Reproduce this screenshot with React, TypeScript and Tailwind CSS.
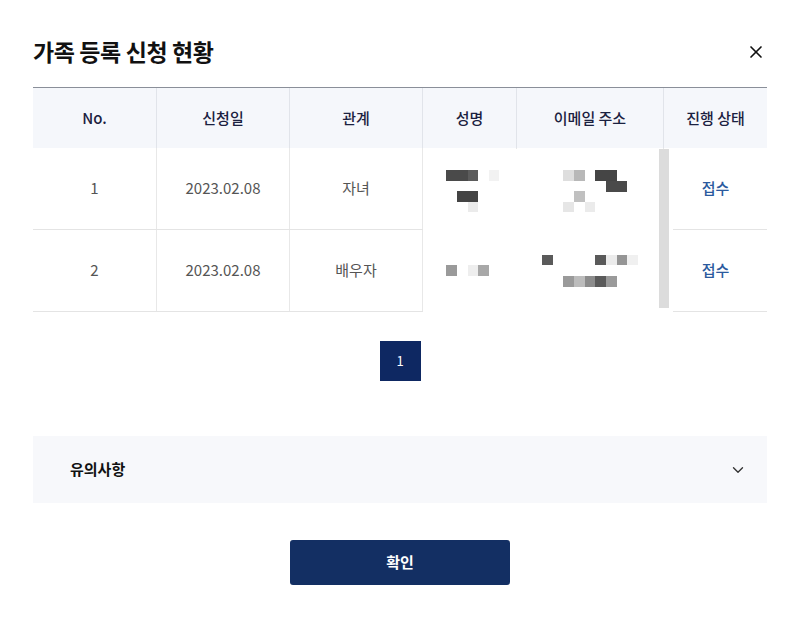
import { X, ChevronDown } from "lucide-react";

const COLS = ["No.", "신청일", "관계", "성명", "이메일 주소", "진행 상태"];

const ROWS = [
  { no: "1", date: "2023.02.08", rel: "자녀", status: "접수" },
  { no: "2", date: "2023.02.08", rel: "배우자", status: "접수" },
];

// pixelated redaction over name / email cells: [x, y, w, h, color]
const BLOCKS: [number, number, number, number, string][] = [
  [23, 21, 22, 11, "#4a4a4a"],
  [45, 21, 10, 11, "#5c5c5c"],
  [66, 21, 10, 11, "#f2f2f2"],
  [34, 42, 21, 11, "#444"],
  [45, 53, 10, 10, "#ebebeb"],
  [140, 21, 11, 11, "#dedede"],
  [151, 21, 11, 11, "#b8b8b8"],
  [172, 21, 22, 11, "#454545"],
  [183, 32, 21, 11, "#4a4a4a"],
  [151, 42, 11, 11, "#c0c0c0"],
  [140, 53, 11, 10, "#e6e6e6"],
  [162, 53, 10, 10, "#ebebeb"],
  [23, 116, 11, 11, "#9a9a9a"],
  [45, 116, 10, 11, "#eeeeee"],
  [55, 116, 11, 11, "#a8a8a8"],
  [119, 106, 11, 10, "#5a5a5a"],
  [172, 106, 11, 10, "#5a5a5a"],
  [183, 106, 11, 10, "#ececec"],
  [194, 106, 10, 10, "#959595"],
  [204, 106, 11, 10, "#f0f0f0"],
  [140, 127, 11, 11, "#9a9a9a"],
  [151, 127, 11, 11, "#bcbcbc"],
  [162, 127, 10, 11, "#8c8c8c"],
  [172, 127, 11, 11, "#5a5a5a"],
  [183, 127, 11, 11, "#9a9a9a"],
];

export default function App() {
  return (
    <div
      className="w-[800px] h-[619px] bg-white px-[33px] text-[#333]"
      style={{ fontFamily: '"Noto Sans CJK KR", "Noto Sans", sans-serif' }}
    >
      <div className="flex items-center justify-between h-[87px] pt-[16px]">
        <h1 className="text-[23px] font-bold text-[#111] tracking-[-0.4px]">가족 등록 신청 현황</h1>
        <X className="w-[20px] h-[20px] mr-[1px] text-[#111]" strokeWidth={2} />
      </div>

      <div className="relative border-t border-[#8a8f99]">
        <div className="grid grid-cols-[124px_133px_133px_94px_147px_103px] h-[60px] bg-[#f5f7fb]">
          {COLS.map((c, i) => (
            <div
              key={c}
              className={`flex items-center justify-center text-[15px] font-medium text-[#1b2140] ${
                i < COLS.length - 1 ? "border-r border-[#e1e4ea]" : ""
              }`}
            >
              {c}
            </div>
          ))}
        </div>
        {ROWS.map((r) => (
          <div
            key={r.no}
            className="grid grid-cols-[124px_133px_133px_94px_147px_103px] h-[82px] border-b border-[#e4e4e4] text-[15px] text-[#555]"
          >
            <div className="flex items-center justify-center border-r border-[#e8e8e8]">{r.no}</div>
            <div className="flex items-center justify-center border-r border-[#e8e8e8]">{r.date}</div>
            <div className="flex items-center justify-center border-r border-[#e8e8e8]">{r.rel}</div>
            <div className="border-r border-[#e8e8e8]" />
            <div className="border-r border-[#e8e8e8]" />
            <div className="flex items-center justify-center text-[#2b5a9e] font-medium">{r.status}</div>
          </div>
        ))}
        <svg
          className="absolute left-[390px] top-[61px]"
          width="250"
          height="165"
          viewBox="0 0 250 165"
        >
          <rect x="0" y="0" width="250" height="165" fill="#fff" />
          {BLOCKS.map(([x, y, w, h, c], i) => (
            <rect key={i} x={x} y={y} width={w} height={h} fill={c} />
          ))}
          <rect x="236" y="0" width="10" height="159" fill="#dcdcdc" />
        </svg>
      </div>

      <div className="flex justify-center pt-[29px]">
        <button className="w-[41px] h-[40px] bg-[#0e2862] text-white text-[13px]">1</button>
      </div>

      <div className="mt-[55px] h-[67px] bg-[#f7f8fb] flex items-center justify-between pl-[37px] pr-[20px]">
        <span className="text-[15px] font-bold text-[#111]">유의사항</span>
        <ChevronDown className="w-[18px] h-[18px] text-[#333]" strokeWidth={1.8} />
      </div>

      <div className="flex justify-center pt-[37px]">
        <button className="w-[220px] h-[45px] rounded-[3px] bg-[#132f63] text-white text-[15px] font-bold">
          확인
        </button>
      </div>
    </div>
  );
}
